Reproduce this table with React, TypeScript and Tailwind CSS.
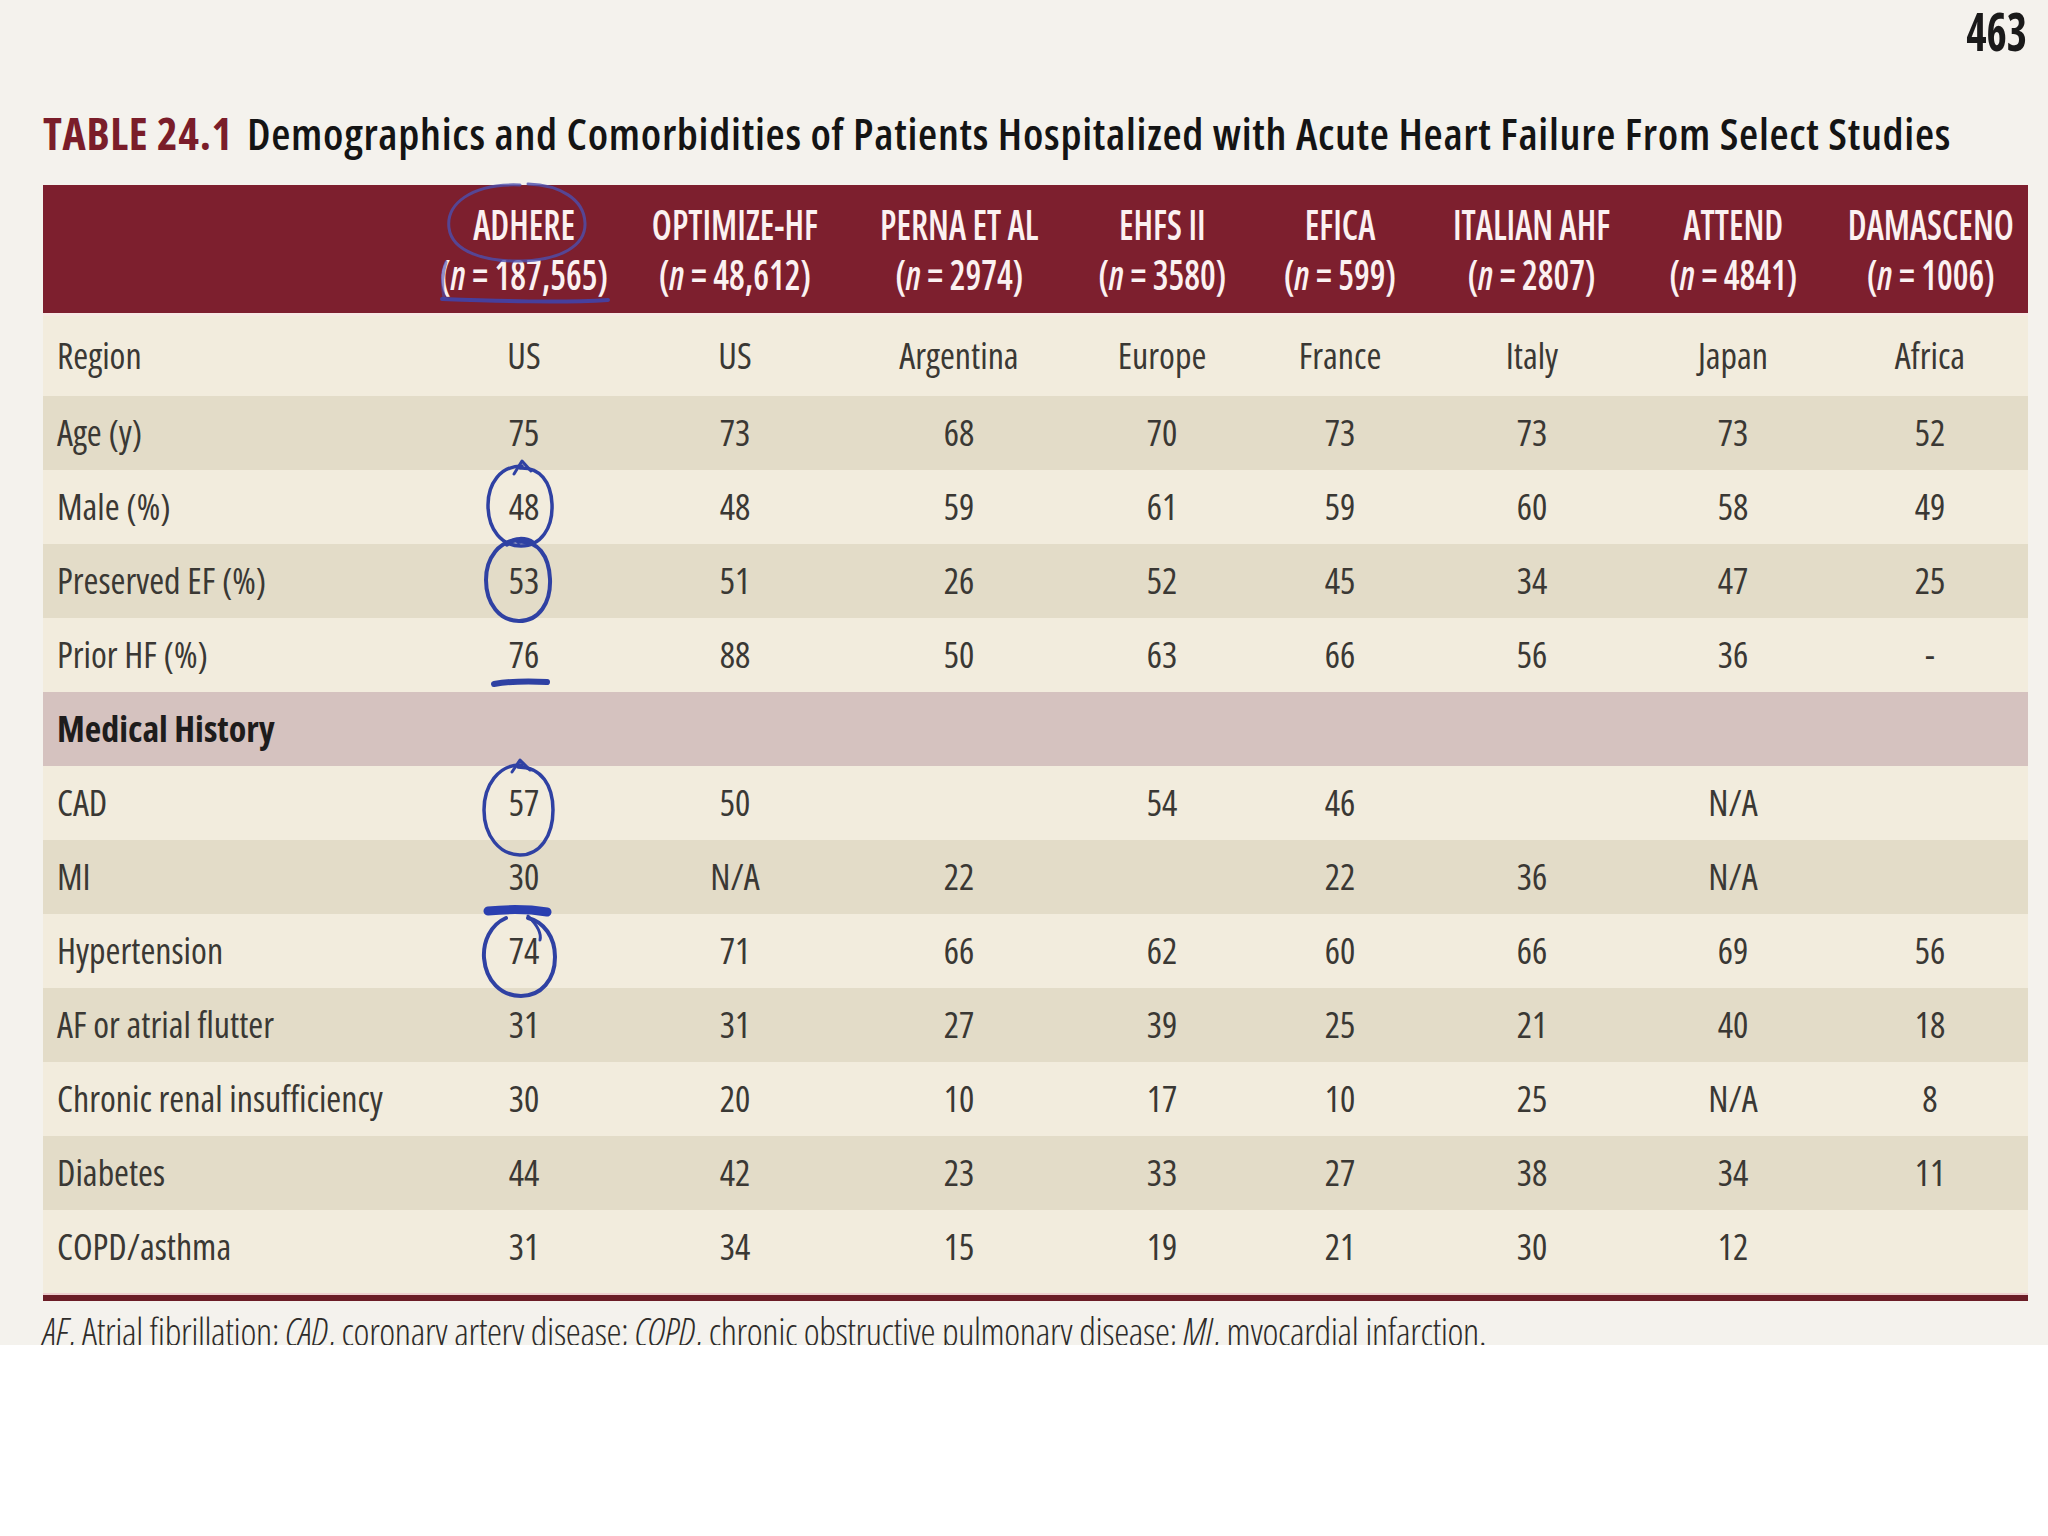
import * as React from "react";

const GRID =
  "grid grid-cols-[379px_204px_218px_230px_176px_180px_204px_198px_196px] items-center";

const studies = [
  { name: "ADHERE", n: "187,565" },
  { name: "OPTIMIZE-HF", n: "48,612" },
  { name: "PERNA ET AL", n: "2974" },
  { name: "EHFS II", n: "3580" },
  { name: "EFICA", n: "599" },
  { name: "ITALIAN AHF", n: "2807" },
  { name: "ATTEND", n: "4841" },
  { name: "DAMASCENO", n: "1006" },
];

const demographics: [string, string[]][] = [
  ["Region", ["US", "US", "Argentina", "Europe", "France", "Italy", "Japan", "Africa"]],
  ["Age (y)", ["75", "73", "68", "70", "73", "73", "73", "52"]],
  ["Male (%)", ["48", "48", "59", "61", "59", "60", "58", "49"]],
  ["Preserved EF (%)", ["53", "51", "26", "52", "45", "34", "47", "25"]],
  ["Prior HF (%)", ["76", "88", "50", "63", "66", "56", "36", "-"]],
];

const history: [string, string[]][] = [
  ["CAD", ["57", "50", "", "54", "46", "", "N/A", ""]],
  ["MI", ["30", "N/A", "22", "", "22", "36", "N/A", ""]],
  ["Hypertension", ["74", "71", "66", "62", "60", "66", "69", "56"]],
  ["AF or atrial flutter", ["31", "31", "27", "39", "25", "21", "40", "18"]],
  ["Chronic renal insufficiency", ["30", "20", "10", "17", "10", "25", "N/A", "8"]],
  ["Diabetes", ["44", "42", "23", "33", "27", "38", "34", "11"]],
  ["COPD/asthma", ["31", "34", "15", "19", "21", "30", "12", ""]],
];

function DataRow({
  label,
  values,
  shaded,
  first,
}: {
  label: string;
  values: string[];
  shaded: boolean;
  first?: boolean;
}) {
  return (
    <div
      className={`${GRID} ${first ? "h-[80px]" : "h-[74px]"} ${
        shaded ? "bg-[#e3dcc8]" : "bg-[#f2ecdd]"
      } text-[36px] font-normal`}
    >
      <div className="pl-[14px] whitespace-nowrap">{label}</div>
      {values.map((v, i) => (
        <div key={i} className="text-center whitespace-nowrap">
          {v}
        </div>
      ))}
    </div>
  );
}

/** Blue ballpoint marks drawn over the scanned page. */
function PenMarks() {
  return (
    <svg
      className="pointer-events-none absolute left-0 top-0"
      width="2048"
      height="1536"
      viewBox="0 0 2048 1536"
      fill="none"
      strokeLinecap="round"
      strokeLinejoin="round"
    >
      {/* ADHERE */}
      <path
        d="M520 185 C 470 183, 446 205, 449 228 C 452 252, 486 262, 522 261 C 560 260, 586 246, 585 223 C 584 199, 560 185, 528 184"
        stroke="#4c4fae"
        strokeOpacity="0.8"
        strokeWidth="3"
      />
      <path d="M446 262 C 442 275, 442 288, 444 298" stroke="#4c4fae" strokeOpacity="0.6" strokeWidth="3" />
      <path d="M442 299 C 500 301, 560 303, 608 300" stroke="#3d45b0" strokeOpacity="0.85" strokeWidth="4" />
      {/* 48 */}
      <path
        d="M522 466 C 500 466, 488 484, 488 505 C 488 530, 502 546, 521 546 C 541 546, 553 528, 552 504 C 551 482, 540 467, 520 468"
        stroke="#2f41a3"
        strokeWidth="3.5"
      />
      <path d="M514 474 L522 461 L531 471" stroke="#2f41a3" strokeWidth="3" />
      {/* 53 */}
      <path
        d="M520 540 C 499 540, 486 558, 486 580 C 486 604, 500 621, 519 621 C 539 621, 551 603, 550 579 C 549 556, 538 540, 518 542"
        stroke="#2f41a3"
        strokeWidth="4"
      />
      <path d="M507 544 C 514 538, 526 538, 533 543" stroke="#2f41a3" strokeWidth="5" />
      {/* 76 underline */}
      <path d="M494 684 C 512 681, 530 681, 547 682" stroke="#2f41a3" strokeWidth="6" />
      {/* 57 */}
      <path
        d="M522 765 C 498 764, 484 786, 484 810 C 484 836, 500 855, 520 855 C 540 855, 553 836, 553 810 C 553 786, 542 767, 518 767"
        stroke="#2f41a3"
        strokeWidth="3.5"
      />
      <path d="M512 772 L520 760 L530 770" stroke="#2f41a3" strokeWidth="3" />
      {/* stroke above 74 */}
      <path d="M488 911 C 508 909, 528 909, 547 912" stroke="#2b3fb0" strokeWidth="9" />
      {/* 74 */}
      <path
        d="M506 918 C 490 925, 483 942, 484 958 C 486 981, 501 996, 521 996 C 541 996, 555 980, 555 957 C 555 937, 544 922, 528 918"
        stroke="#2f41a3"
        strokeWidth="4"
      />
      <path d="M528 916 C 536 924, 542 932, 540 940" stroke="#2f41a3" strokeWidth="3" />
    </svg>
  );
}

export default function App() {
  return (
    <div className="relative min-h-screen w-[2048px] bg-white font-['Open_Sans','Liberation_Sans',sans-serif] font-stretch-condensed text-[#3a3834]">
      <div className="h-[1345px] overflow-hidden bg-[#f4f2ed] pt-[3px]">
        <div className="flex h-[54px] justify-end pr-[21px]">
          <span className="inline-block origin-right scale-x-[0.8] text-[54px] font-bold leading-[54px] text-[#1a1a1a]">
            463
          </span>
        </div>

        <h1 className="mt-[52px] pl-[43px] text-[44px] font-bold leading-[48px] tracking-[0.016em] whitespace-nowrap text-[#141414]">
          <span className="text-[#7a1d2a]">TABLE 24.1</span>
          <span className="ml-[14px] font-semibold">
            Demographics and Comorbidities of Patients Hospitalized with Acute
            Heart Failure From Select Studies
          </span>
        </h1>

        <div className="ml-[43px] mt-[28px] w-[1985px]">
          <div className={`${GRID} h-[128px] bg-[#7d1f2e] text-[42px] font-semibold leading-[50px] text-[#fbf1f1]`}>
            <div />
            {studies.map((s) => (
              <div key={s.name} className="text-center">
                <div className="inline-block scale-x-[0.84] whitespace-nowrap">
                  <div>{s.name}</div>
                  <div>
                    (<span className="italic">n</span> = {s.n})
                  </div>
                </div>
              </div>
            ))}
          </div>
          <div className="h-[3px] bg-[#f7e9e4]" />

          {demographics.map(([label, values], i) => (
            <DataRow key={label} label={label} values={values} shaded={i % 2 === 1} first={i === 0} />
          ))}

          <div className="flex h-[74px] items-center bg-[#d5c2bf] pl-[14px] text-[36px] font-bold text-[#1e1c1c]">
            Medical History
          </div>

          {history.map(([label, values], i) => (
            <DataRow key={label} label={label} values={values} shaded={i % 2 === 1} />
          ))}
          <div className="h-[9px] bg-[#f2ecdd]" />
          <div className="h-[2px] bg-[#efcfcf]" />
          <div className="h-[6px] bg-[#6b1d26]" />
        </div>

        <p className="ml-[43px] mt-[8px] text-[38px] font-light leading-[44px] tracking-[-0.01em] whitespace-nowrap text-[#2e2c2a]">
          <span className="italic">AF</span>, Atrial fibrillation;{" "}
          <span className="italic">CAD</span>, coronary artery disease;{" "}
          <span className="italic">COPD</span>, chronic obstructive pulmonary
          disease; <span className="italic">MI</span>, myocardial infarction.
        </p>
      </div>

      <PenMarks />
    </div>
  );
}
